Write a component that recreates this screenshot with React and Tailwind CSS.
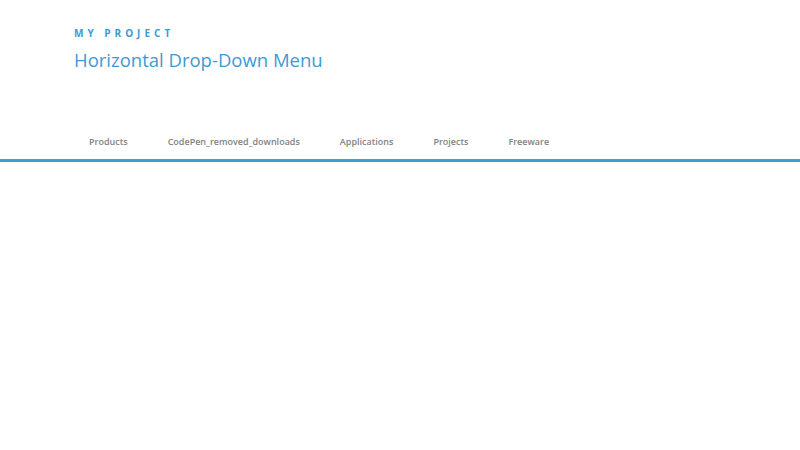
import React from 'react';

const menuItems = ['Products', 'CodePen_removed_downloads', 'Applications', 'Projects', 'Freeware'];

export default function App() {
  return (
    <div className="min-h-[450px] w-full bg-white" style={{ fontFamily: '"Open Sans", sans-serif' }}>
      <header className="px-[74px] pt-[27px]">
        <div className="text-[10px] font-bold uppercase leading-[12px] tracking-[4px] text-[#3b9bd6]">
          My Project
        </div>
        <h1 className="mt-[9px] text-[18.5px] leading-[24px] text-[#3b9bd6]">Horizontal Drop-Down Menu</h1>
      </header>

      <nav className="mt-[53px] border-b-[3px] border-[#3d9ddb]">
        <ul className="flex pl-[69px]">
          {menuItems.map((item) => (
            <li key={item}>
              <a className="block px-[20px] py-[10px] text-[9px] font-semibold leading-[14px] text-[#828282]">{item}</a>
            </li>
          ))}
        </ul>
      </nav>
    </div>
  );
}
